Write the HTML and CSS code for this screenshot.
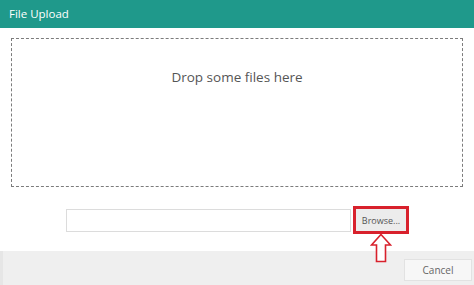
FILE: index.html
```html
<!DOCTYPE html>
<html>
<head>
<meta charset="utf-8" />
<title>File Upload</title>
<link rel="stylesheet" href="styles.css">
</head>
<body>
<div class="dialog">
	<div class="dialog-head">File Upload</div>
	<div class="dialog-body">
		<div class="dropzone">Drop some files here</div>
		<div class="picker">
			<div class="picker-field"></div>
			<div class="picker-browse">
				<button class="btn-browse">Browse...</button>
				<svg class="hint-arrow" width="22" height="30" viewBox="0 0 22 30">
					<path d="M11 1.5 L20.5 12 L15.5 12 L15.5 28.5 L6.5 28.5 L6.5 12 L1.5 12 Z" fill="#fff" stroke="#d8212c" stroke-width="1.6" stroke-linejoin="miter"/>
				</svg>
			</div>
		</div>
	</div>
	<div class="dialog-foot">
		<button class="btn-cancel">Cancel</button>
	</div>
</div>
</body>
</html>
```

FILE: styles.css
```css
/*reset*/
* { padding: 0; margin: 0; box-sizing: border-box; }
body { font-family: "Open Sans", "Liberation Sans", sans-serif; background: #fff; width: 474px; height: 285px; overflow: hidden; }

/*dialog*/
.dialog { display: flex; flex-direction: column; height: 285px; }
.dialog-head { height: 28px; background: #1f998b; color: #fff; font-size: 11.5px; line-height: 27px; padding-left: 9px; }
.dialog-body { flex: 1; padding: 10px 11px 0 11px; }
.dropzone { height: 149px; border: 1px dashed #7c7c7c; color: #555; font-size: 13.5px; text-align: center; padding-top: 29px; }

/*picker*/
.picker { display: flex; align-items: center; margin: 19px 0 0 55px; }
.picker-field { width: 285px; height: 23px; border: 1px solid #dcdcdc; background: #fff; }
.picker-browse { position: relative; margin-left: 2px; }
.btn-browse { display: block; width: 56px; height: 28px; border: 3px solid #d8212c; background: #ececec; font-family: inherit; font-size: 9px; color: #555; padding-top: 1px; }
.hint-arrow { position: absolute; top: 27px; left: 17px; }

/*foot*/
.dialog-foot { height: 34px; background: #efefef; display: flex; justify-content: flex-end; align-items: center; padding: 3px 2px 0 0; border-left: 3px solid #e6e6e6; }
.btn-cancel { width: 68px; height: 22px; background: #f7f7f7; border: 1px solid #e2e2e2; font-family: inherit; font-size: 10px; color: #666; }
```
